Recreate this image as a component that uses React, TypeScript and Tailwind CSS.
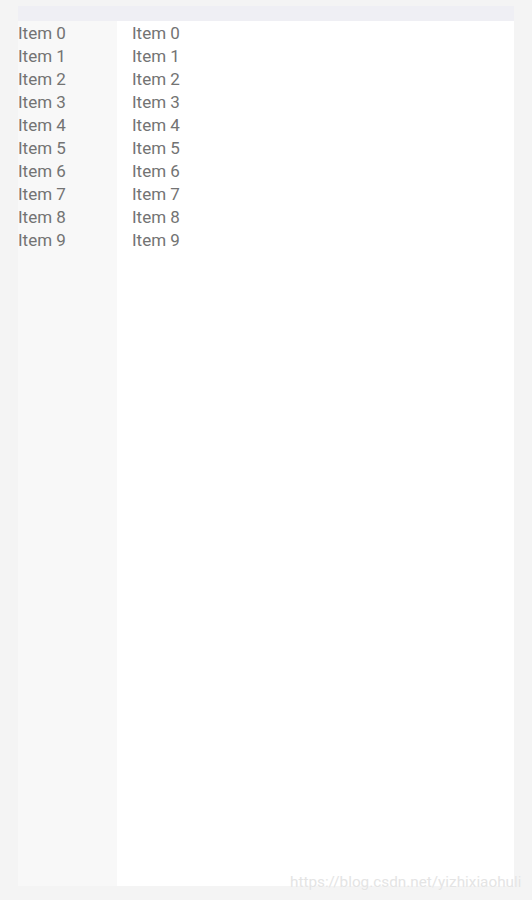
import React from "react";

export default function App() {
  const items = Array.from({ length: 10 }, (_, i) => `Item ${i}`);
  return (
    <div className="relative w-[532px] h-[900px] bg-[#f4f4f4] pt-[6px] pl-[18px] pr-[18px] pb-[14px] flex flex-col" style={{ fontFamily: "Roboto, 'Noto Sans', sans-serif" }}>
      <div className="h-[15px] bg-[#efeff4] shrink-0" />
      <div className="flex flex-1">
        <div className="w-[99px] bg-[#f8f8f8] flex flex-col pt-[1px]">
          {items.map((t) => (
            <div key={t} className="h-[23px] leading-[23px] text-[17px] text-[#737373]">{t}</div>
          ))}
        </div>
        <div className="flex-1 bg-white flex flex-col pl-[15px] pt-[1px]">
          {items.map((t) => (
            <div key={t} className="h-[23px] leading-[23px] text-[17px] text-[#737373]">{t}</div>
          ))}
        </div>
      </div>
      <div className="absolute left-[290px] top-[872px] text-[15.3px] text-[#e4e4e4] leading-[20px] whitespace-nowrap [text-shadow:0_0_1px_#ffffff]" style={{ fontFamily: "Roboto, 'Liberation Sans', sans-serif" }}>
        https://blog.csdn.net/yizhixiaohuli
      </div>
    </div>
  );
}
